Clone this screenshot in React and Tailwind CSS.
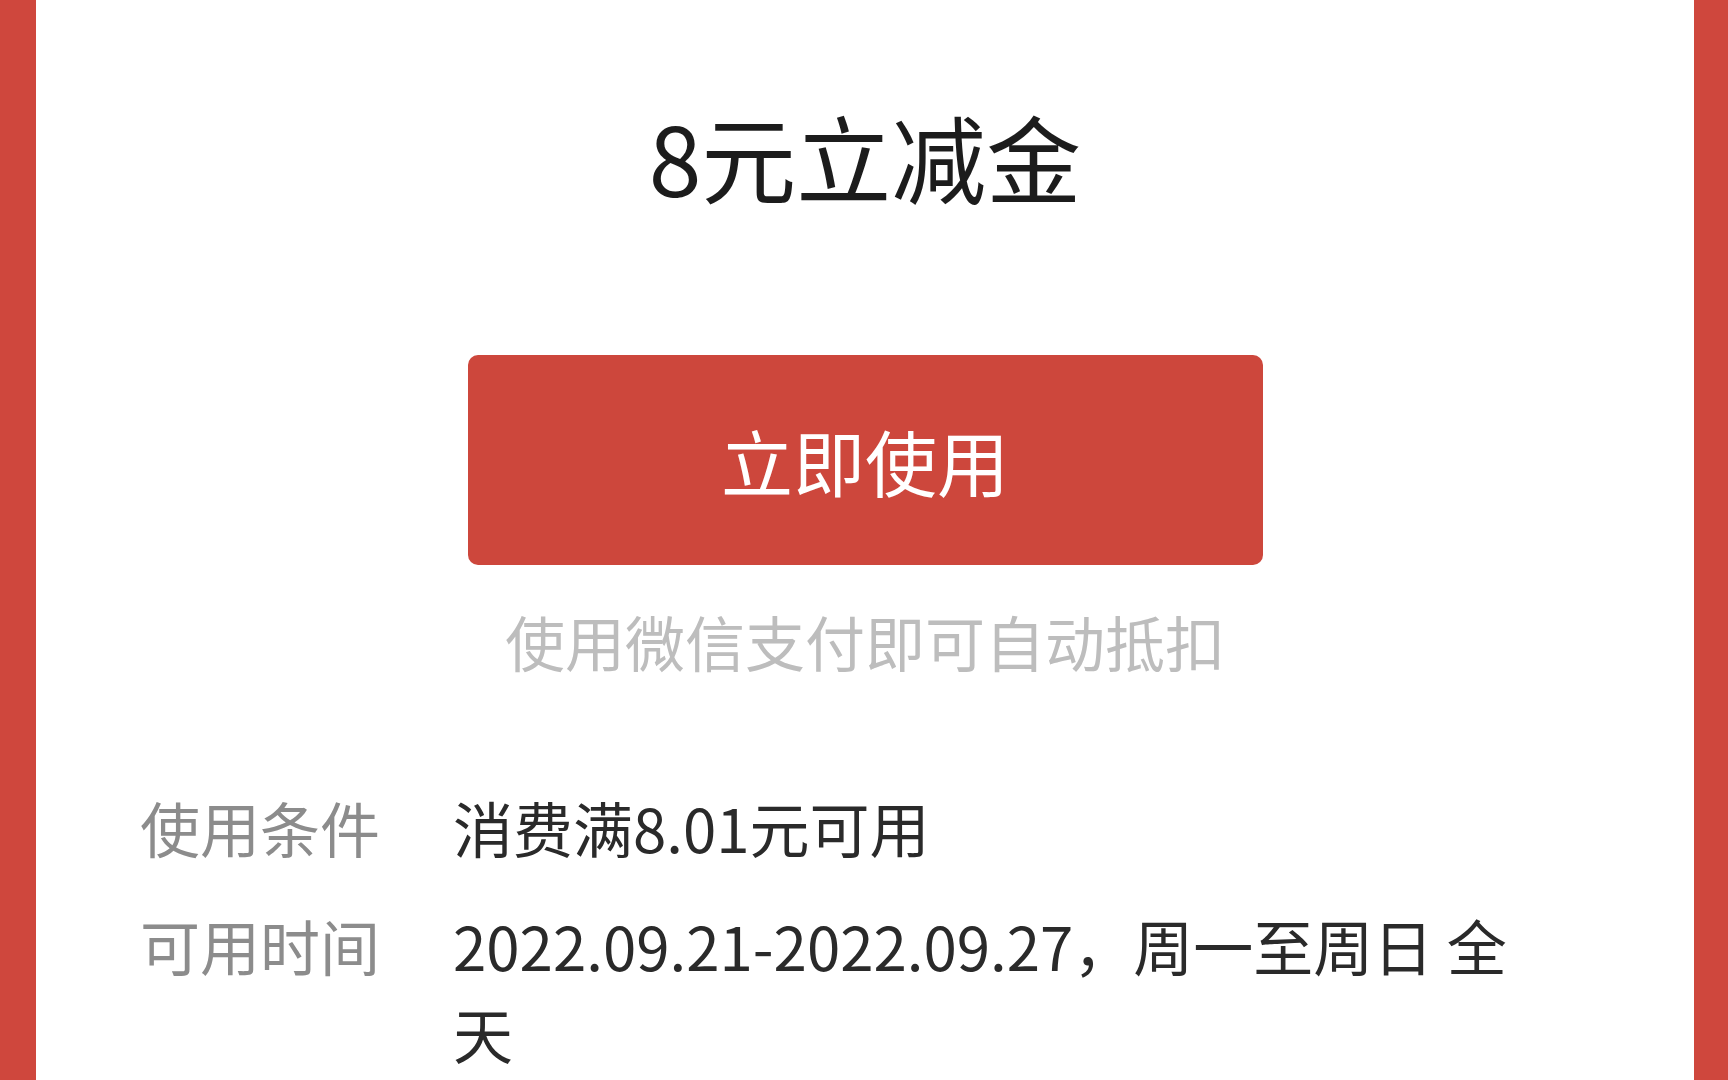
import React from 'react';

const font = { fontFamily: '"Noto Sans CJK SC", "Noto Sans", sans-serif' };

// Coupon detail rows
const details = [
  { label: '使用条件', value: '消费满8.01元可用' },
  { label: '可用时间', value: '2022.09.21-2022.09.27，周一至周日 全天' },
];

const DetailRow = ({ label, value }) => (
  <div className="flex items-start text-[60px] leading-[88px]">
    <div className="w-[313px] shrink-0 text-[#8c8c8c]">{label}</div>
    <div className="flex-1 text-[#2a2a2a]">{value}</div>
  </div>
);

const App = () => {
  return (
    <div className="flex h-[1080px] w-full overflow-hidden bg-white" style={font}>
      {/* Left red edge */}
      <div className="w-[36px] shrink-0 bg-[#cf473d]" />

      <div className="flex-1 bg-white">
        {/* Title */}
        <h1 className="pt-[108px] text-center text-[95px] font-normal leading-none text-[#1c1c1c]">
          8元立减金
        </h1>

        {/* Use button */}
        <button className="mx-auto mt-[152px] flex h-[210px] w-[795px] items-center justify-center rounded-[10px] bg-[#cd473c] text-[72px] font-normal text-white">
          立即使用
        </button>

        <p className="mt-[46px] text-center text-[60px] leading-none text-[#bdbdbd]">
          使用微信支付即可自动抵扣
        </p>

        {/* Details */}
        <div className="mt-[112px] flex flex-col gap-[30px] pl-[104px] pr-[149px]">
          {details.map((d) => (
            <DetailRow key={d.label} label={d.label} value={d.value} />
          ))}
        </div>
      </div>

      {/* Right red edge */}
      <div className="w-[34px] shrink-0 bg-[#cf473d]" />
    </div>
  );
};

export default App;
